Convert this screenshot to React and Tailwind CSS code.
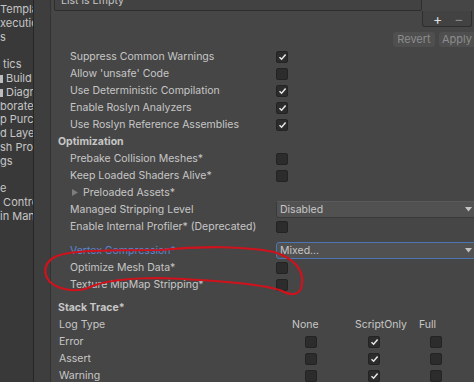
import React from "react";

const Check = ({ on }) => (
  <div className="w-[12px] h-[12px] rounded-[2px] bg-[#2c2c2c] border border-[#232323] flex items-center justify-center">
    {on && (
      <svg width="9" height="8" viewBox="0 0 9 8">
        <path d="M1.5 4.2 L3.6 6.2 L7.6 1.4" fill="none" stroke="#e6e6e6" strokeWidth="1.5" />
      </svg>
    )}
  </div>
);

const Dropdown = ({ value, focused }) => (
  <div
    className={`w-[202px] h-[17px] shrink-0 flex items-center justify-between pl-[3px] pr-[5px] rounded-[3px] bg-[#515151] border ${
      focused ? "border-[#4a77b4]" : "border-[#3a3a3a] border-t-[#5a5a5a]"
    }`}
  >
    <span>{value}</span>
    <svg width="7" height="5" viewBox="0 0 7 5">
      <path d="M0 0 H7 L3.5 4.5 Z" fill="#c4c4c4" />
    </svg>
  </div>
);

const Row = ({ label, children, blue }) => (
  <div className="h-[17px] flex items-center pl-[19px]">
    <div className={`w-[206px] shrink-0 whitespace-nowrap ${blue ? "text-[#5a86d2]" : ""}`}>{label}</div>
    {children}
  </div>
);

const sidebar = [
  "Templat",
  "xecutio",
  "s",
  "",
  " tics",
  "#Build",
  "#Diagr",
  "borate",
  "p Purc",
  "d Laye",
  "sh Pro",
  "gs",
  "",
  "e",
  " Contro",
  "in Man",
];

export default function App() {
  return (
    <div
      className="relative w-[474px] h-[382px] overflow-hidden flex bg-[#464646] text-[10.5px] text-[#c6c6c6]"
      style={{ fontFamily: "Inter, 'Noto Sans', sans-serif" }}
    >
      <div className="w-[33px] shrink-0 bg-[#393939] pt-[3px] overflow-hidden text-[11px]">
        {sidebar.map((s, i) => (
          <div key={i} className="h-[13.8px] leading-[13.8px] whitespace-nowrap flex items-center">
            {s.startsWith("#") ? (
              <>
                <span className="w-[3px] h-[8px] bg-[#bdbdbd] mr-[3px] shrink-0" />
                <span>{s.slice(1)}</span>
              </>
            ) : (
              <span className="whitespace-pre">{s}</span>
            )}
          </div>
        ))}
      </div>
      <div className="w-[1px] shrink-0 bg-[#262626]" />
      <div className="w-[17px] shrink-0 bg-[#3e3e3e] border-r border-[#333333]" />

      <div className="flex-1 min-w-0 flex flex-col">
        <div className="ml-[3px] w-[368px] h-[20px] shrink-0 -mt-[9px] bg-[#424242] border border-[#2e2e2e] rounded-b-[2px] pl-[6px] flex items-center">
          List is Empty
        </div>
        <div className="ml-[371px] w-[50px] h-[16px] shrink-0 bg-[#424242] border border-t-0 border-[#2e2e2e] rounded-b-[3px] flex items-center text-[14px]">
          <span className="ml-[10px] text-[#e0e0e0]">+</span>
          <span className="ml-[12px] text-[#8a8a8a]">−</span>
        </div>
        <div className="mt-[5px] ml-[342px] h-[15px] shrink-0 flex gap-[4px] text-[#8c8c8c] text-[11px]">
          <div className="w-[42px] shrink-0 bg-[#4f4f4f] rounded-[3px] flex items-center justify-center">Revert</div>
          <div className="w-[36px] shrink-0 bg-[#4f4f4f] rounded-[3px] flex items-center justify-center">Apply</div>
        </div>

        <div className="mt-[1px] flex flex-col">
          <Row label="Suppress Common Warnings"><Check on /></Row>
          <Row label="Allow 'unsafe' Code"><Check /></Row>
          <Row label="Use Deterministic Compilation"><Check on /></Row>
          <Row label="Enable Roslyn Analyzers"><Check on /></Row>
          <Row label="Use Roslyn Reference Assemblies"><Check on /></Row>
          <div className="h-[17px] flex items-center pl-[7px] font-bold">Optimization</div>
          <Row label="Prebake Collision Meshes*"><Check /></Row>
          <Row label="Keep Loaded Shaders Alive*"><Check /></Row>
          <div className="h-[17px] flex items-center pl-[21px]">
            <svg width="6" height="7" viewBox="0 0 6 7" className="mr-[5px]">
              <path d="M0 0 L6 3.5 L0 7 Z" fill="#7d7d7d" />
            </svg>
            Preloaded Assets*
          </div>
          <Row label="Managed Stripping Level"><Dropdown value="Disabled" /></Row>
          <Row label="Enable Internal Profiler* (Deprecated)"><Check /></Row>
          <div className="h-[7px]" />
          <Row label="Vertex Compression*" blue><Dropdown value="Mixed..." focused /></Row>
          <Row label="Optimize Mesh Data*"><Check /></Row>
          <Row label="Texture MipMap Stripping*"><Check /></Row>
          <div className="h-[6px]" />
          <div className="h-[17px] flex items-center pl-[7px] font-bold">Stack Trace*</div>
          <div className="h-[17px] flex items-center pl-[8px]">
            <div className="w-[233px] shrink-0">Log Type</div>
            <div className="w-[63px] shrink-0">None</div>
            <div className="w-[64px] shrink-0">ScriptOnly</div>
            <div>Full</div>
          </div>
          {["Error", "Assert", "Warning"].map((l) => (
            <div key={l} className="h-[17px] flex items-center pl-[8px]">
              <div className="w-[233px] shrink-0">{l}</div>
              <div className="w-[63px] shrink-0 pl-[13px]"><Check /></div>
              <div className="w-[64px] shrink-0 pl-[13px]"><Check on /></div>
              <div className="pl-[11px]"><Check /></div>
            </div>
          ))}
        </div>
      </div>

      <svg className="absolute inset-0 pointer-events-none" width="474" height="382" viewBox="0 0 474 382">
        <path
          d="M160 250 C200 246 245 246 274 252 C294 258 304 270 302 284 C301 294 293 297 282 291 C262 283 210 280 160 278 C125 278 100 282 88 288 C74 293 58 289 50 282 C42 273 45 263 53 258 C62 252 80 250 160 250 Z"
          fill="none"
          stroke="#d0121c"
          strokeWidth="2.2"
          strokeLinejoin="round"
        />
      </svg>
    </div>
  );
}
